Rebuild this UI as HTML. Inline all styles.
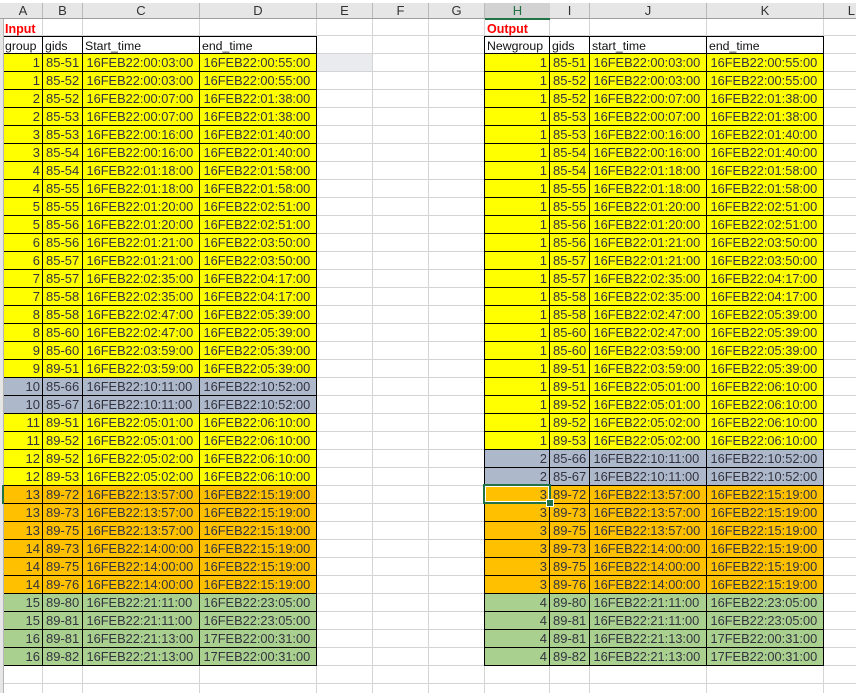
<!DOCTYPE html>
<html><head><meta charset="utf-8"><style>
html,body{margin:0;padding:0;background:#fff}
body{width:856px;height:693px;position:relative;overflow:hidden;font-family:"Liberation Sans",sans-serif}
.grid{position:absolute;left:3px;top:19px;width:853px;height:674px;background-image:linear-gradient(to bottom,transparent 17px,#d4d4d4 17px);background-size:100% 18px;background-position:0 -1px}
.v{position:absolute;top:19px;height:674px;width:1px;background:#d4d4d4}
.top{position:absolute;left:0;top:3px;width:856px;height:15px;background:#e6e6e6;border-bottom:1px solid #9f9f9f}
.side{position:absolute;left:0;top:19px;width:3px;height:674px;background:#e6e6e6;border-right:1px solid #b5b5b5}
.h{position:absolute;top:3px;height:15px;line-height:16px;text-align:center;font-size:13px;color:#333;border-right:1px solid #b9b9b9;box-sizing:border-box}
.h.s{background:#d2d2d2;color:#217346;height:17px;border-bottom:2px solid #217346;border-right:0}
.lbl{position:absolute;top:21px;font-size:12.5px;font-weight:bold;color:#f00;line-height:16px}
table{position:absolute;top:36px;border-collapse:separate;border-spacing:0;table-layout:fixed;border-top:1px solid #000}
td{height:18px;box-sizing:border-box;padding:0 2px 0 3px;border-right:1px solid #000;border-bottom:1px solid #000;font-size:13px;line-height:17px;color:#333340;white-space:nowrap;overflow:hidden;vertical-align:bottom}
td:nth-child(n+3){font-size:12.8px;padding-left:3.5px}
td.n{text-align:right}
tr.t td{height:17px;font-size:12.3px;color:#111;background:#fff;line-height:13px;padding-left:2px}
tr.y td{background:#ff0}
tr.g td{background:#adb9ca}
tr.o td{background:#ffc000}
tr.l td{background:#a9d08e}
#o td:first-child{border-left:1px solid #000}
#in td:first-child{padding-left:1px}
.sel{position:absolute;left:483px;top:484px;width:68px;height:20px;box-sizing:border-box;border:2px solid #217346;box-shadow:inset 0 0 0 1px #fff}
.hd{position:absolute;left:546px;top:499px;width:6px;height:6px;background:#217346;border:1px solid #fff}
</style></head><body>
<div class="grid"></div>
<div class="v" style="left:42px"></div><div class="v" style="left:82px"></div><div class="v" style="left:199px"></div><div class="v" style="left:316px"></div><div class="v" style="left:372px"></div><div class="v" style="left:428px"></div><div class="v" style="left:484px"></div><div class="v" style="left:549px"></div><div class="v" style="left:589px"></div><div class="v" style="left:706px"></div><div class="v" style="left:823px"></div>
<div class="top"></div><div class="side"></div>
<div style="position:absolute;left:317px;top:54px;width:55px;height:17px;background:#e9ebef"></div>
<div class="h" style="left:4px;width:39px">A</div><div class="h" style="left:43px;width:40px">B</div><div class="h" style="left:83px;width:117px">C</div><div class="h" style="left:200px;width:117px">D</div><div class="h" style="left:317px;width:56px">E</div><div class="h" style="left:373px;width:56px">F</div><div class="h" style="left:429px;width:56px">G</div><div class="h s" style="left:485px;width:65px">H</div><div class="h" style="left:550px;width:40px">I</div><div class="h" style="left:590px;width:117px">J</div><div class="h" style="left:707px;width:117px">K</div><div class="h" style="left:824px;width:32px;border-right:0;text-align:right;padding-right:1px">L</div>
<div class="lbl" style="left:5px">Input</div><div class="lbl" style="left:487px">Output</div>
<div style="position:absolute;left:2px;top:485px;width:2px;height:19px;background:#217346"></div>
<table id="in" style="left:4px;width:313px"><colgroup><col style="width:39px"><col style="width:40px"><col style="width:117px"><col style="width:117px"></colgroup>
<tr class="t"><td>group</td><td>gids</td><td>Start_time</td><td>end_time</td></tr>
<tr class="y"><td class="n">1</td><td>85-51</td><td>16FEB22:00:03:00</td><td>16FEB22:00:55:00</td></tr>
<tr class="y"><td class="n">1</td><td>85-52</td><td>16FEB22:00:03:00</td><td>16FEB22:00:55:00</td></tr>
<tr class="y"><td class="n">2</td><td>85-52</td><td>16FEB22:00:07:00</td><td>16FEB22:01:38:00</td></tr>
<tr class="y"><td class="n">2</td><td>85-53</td><td>16FEB22:00:07:00</td><td>16FEB22:01:38:00</td></tr>
<tr class="y"><td class="n">3</td><td>85-53</td><td>16FEB22:00:16:00</td><td>16FEB22:01:40:00</td></tr>
<tr class="y"><td class="n">3</td><td>85-54</td><td>16FEB22:00:16:00</td><td>16FEB22:01:40:00</td></tr>
<tr class="y"><td class="n">4</td><td>85-54</td><td>16FEB22:01:18:00</td><td>16FEB22:01:58:00</td></tr>
<tr class="y"><td class="n">4</td><td>85-55</td><td>16FEB22:01:18:00</td><td>16FEB22:01:58:00</td></tr>
<tr class="y"><td class="n">5</td><td>85-55</td><td>16FEB22:01:20:00</td><td>16FEB22:02:51:00</td></tr>
<tr class="y"><td class="n">5</td><td>85-56</td><td>16FEB22:01:20:00</td><td>16FEB22:02:51:00</td></tr>
<tr class="y"><td class="n">6</td><td>85-56</td><td>16FEB22:01:21:00</td><td>16FEB22:03:50:00</td></tr>
<tr class="y"><td class="n">6</td><td>85-57</td><td>16FEB22:01:21:00</td><td>16FEB22:03:50:00</td></tr>
<tr class="y"><td class="n">7</td><td>85-57</td><td>16FEB22:02:35:00</td><td>16FEB22:04:17:00</td></tr>
<tr class="y"><td class="n">7</td><td>85-58</td><td>16FEB22:02:35:00</td><td>16FEB22:04:17:00</td></tr>
<tr class="y"><td class="n">8</td><td>85-58</td><td>16FEB22:02:47:00</td><td>16FEB22:05:39:00</td></tr>
<tr class="y"><td class="n">8</td><td>85-60</td><td>16FEB22:02:47:00</td><td>16FEB22:05:39:00</td></tr>
<tr class="y"><td class="n">9</td><td>85-60</td><td>16FEB22:03:59:00</td><td>16FEB22:05:39:00</td></tr>
<tr class="y"><td class="n">9</td><td>89-51</td><td>16FEB22:03:59:00</td><td>16FEB22:05:39:00</td></tr>
<tr class="g"><td class="n">10</td><td>85-66</td><td>16FEB22:10:11:00</td><td>16FEB22:10:52:00</td></tr>
<tr class="g"><td class="n">10</td><td>85-67</td><td>16FEB22:10:11:00</td><td>16FEB22:10:52:00</td></tr>
<tr class="y"><td class="n">11</td><td>89-51</td><td>16FEB22:05:01:00</td><td>16FEB22:06:10:00</td></tr>
<tr class="y"><td class="n">11</td><td>89-52</td><td>16FEB22:05:01:00</td><td>16FEB22:06:10:00</td></tr>
<tr class="y"><td class="n">12</td><td>89-52</td><td>16FEB22:05:02:00</td><td>16FEB22:06:10:00</td></tr>
<tr class="y"><td class="n">12</td><td>89-53</td><td>16FEB22:05:02:00</td><td>16FEB22:06:10:00</td></tr>
<tr class="o"><td class="n">13</td><td>89-72</td><td>16FEB22:13:57:00</td><td>16FEB22:15:19:00</td></tr>
<tr class="o"><td class="n">13</td><td>89-73</td><td>16FEB22:13:57:00</td><td>16FEB22:15:19:00</td></tr>
<tr class="o"><td class="n">13</td><td>89-75</td><td>16FEB22:13:57:00</td><td>16FEB22:15:19:00</td></tr>
<tr class="o"><td class="n">14</td><td>89-73</td><td>16FEB22:14:00:00</td><td>16FEB22:15:19:00</td></tr>
<tr class="o"><td class="n">14</td><td>89-75</td><td>16FEB22:14:00:00</td><td>16FEB22:15:19:00</td></tr>
<tr class="o"><td class="n">14</td><td>89-76</td><td>16FEB22:14:00:00</td><td>16FEB22:15:19:00</td></tr>
<tr class="l"><td class="n">15</td><td>89-80</td><td>16FEB22:21:11:00</td><td>16FEB22:23:05:00</td></tr>
<tr class="l"><td class="n">15</td><td>89-81</td><td>16FEB22:21:11:00</td><td>16FEB22:23:05:00</td></tr>
<tr class="l"><td class="n">16</td><td>89-81</td><td>16FEB22:21:13:00</td><td>17FEB22:00:31:00</td></tr>
<tr class="l"><td class="n">16</td><td>89-82</td><td>16FEB22:21:13:00</td><td>17FEB22:00:31:00</td></tr>
</table>
<table id="o" style="left:484px;width:340px"><colgroup><col style="width:66px"><col style="width:40px"><col style="width:117px"><col style="width:117px"></colgroup>
<tr class="t"><td>Newgroup</td><td>gids</td><td>start_time</td><td>end_time</td></tr>
<tr class="y"><td class="n">1</td><td>85-51</td><td>16FEB22:00:03:00</td><td>16FEB22:00:55:00</td></tr>
<tr class="y"><td class="n">1</td><td>85-52</td><td>16FEB22:00:03:00</td><td>16FEB22:00:55:00</td></tr>
<tr class="y"><td class="n">1</td><td>85-52</td><td>16FEB22:00:07:00</td><td>16FEB22:01:38:00</td></tr>
<tr class="y"><td class="n">1</td><td>85-53</td><td>16FEB22:00:07:00</td><td>16FEB22:01:38:00</td></tr>
<tr class="y"><td class="n">1</td><td>85-53</td><td>16FEB22:00:16:00</td><td>16FEB22:01:40:00</td></tr>
<tr class="y"><td class="n">1</td><td>85-54</td><td>16FEB22:00:16:00</td><td>16FEB22:01:40:00</td></tr>
<tr class="y"><td class="n">1</td><td>85-54</td><td>16FEB22:01:18:00</td><td>16FEB22:01:58:00</td></tr>
<tr class="y"><td class="n">1</td><td>85-55</td><td>16FEB22:01:18:00</td><td>16FEB22:01:58:00</td></tr>
<tr class="y"><td class="n">1</td><td>85-55</td><td>16FEB22:01:20:00</td><td>16FEB22:02:51:00</td></tr>
<tr class="y"><td class="n">1</td><td>85-56</td><td>16FEB22:01:20:00</td><td>16FEB22:02:51:00</td></tr>
<tr class="y"><td class="n">1</td><td>85-56</td><td>16FEB22:01:21:00</td><td>16FEB22:03:50:00</td></tr>
<tr class="y"><td class="n">1</td><td>85-57</td><td>16FEB22:01:21:00</td><td>16FEB22:03:50:00</td></tr>
<tr class="y"><td class="n">1</td><td>85-57</td><td>16FEB22:02:35:00</td><td>16FEB22:04:17:00</td></tr>
<tr class="y"><td class="n">1</td><td>85-58</td><td>16FEB22:02:35:00</td><td>16FEB22:04:17:00</td></tr>
<tr class="y"><td class="n">1</td><td>85-58</td><td>16FEB22:02:47:00</td><td>16FEB22:05:39:00</td></tr>
<tr class="y"><td class="n">1</td><td>85-60</td><td>16FEB22:02:47:00</td><td>16FEB22:05:39:00</td></tr>
<tr class="y"><td class="n">1</td><td>85-60</td><td>16FEB22:03:59:00</td><td>16FEB22:05:39:00</td></tr>
<tr class="y"><td class="n">1</td><td>89-51</td><td>16FEB22:03:59:00</td><td>16FEB22:05:39:00</td></tr>
<tr class="y"><td class="n">1</td><td>89-51</td><td>16FEB22:05:01:00</td><td>16FEB22:06:10:00</td></tr>
<tr class="y"><td class="n">1</td><td>89-52</td><td>16FEB22:05:01:00</td><td>16FEB22:06:10:00</td></tr>
<tr class="y"><td class="n">1</td><td>89-52</td><td>16FEB22:05:02:00</td><td>16FEB22:06:10:00</td></tr>
<tr class="y"><td class="n">1</td><td>89-53</td><td>16FEB22:05:02:00</td><td>16FEB22:06:10:00</td></tr>
<tr class="g"><td class="n">2</td><td>85-66</td><td>16FEB22:10:11:00</td><td>16FEB22:10:52:00</td></tr>
<tr class="g"><td class="n">2</td><td>85-67</td><td>16FEB22:10:11:00</td><td>16FEB22:10:52:00</td></tr>
<tr class="o"><td class="n">3</td><td>89-72</td><td>16FEB22:13:57:00</td><td>16FEB22:15:19:00</td></tr>
<tr class="o"><td class="n">3</td><td>89-73</td><td>16FEB22:13:57:00</td><td>16FEB22:15:19:00</td></tr>
<tr class="o"><td class="n">3</td><td>89-75</td><td>16FEB22:13:57:00</td><td>16FEB22:15:19:00</td></tr>
<tr class="o"><td class="n">3</td><td>89-73</td><td>16FEB22:14:00:00</td><td>16FEB22:15:19:00</td></tr>
<tr class="o"><td class="n">3</td><td>89-75</td><td>16FEB22:14:00:00</td><td>16FEB22:15:19:00</td></tr>
<tr class="o"><td class="n">3</td><td>89-76</td><td>16FEB22:14:00:00</td><td>16FEB22:15:19:00</td></tr>
<tr class="l"><td class="n">4</td><td>89-80</td><td>16FEB22:21:11:00</td><td>16FEB22:23:05:00</td></tr>
<tr class="l"><td class="n">4</td><td>89-81</td><td>16FEB22:21:11:00</td><td>16FEB22:23:05:00</td></tr>
<tr class="l"><td class="n">4</td><td>89-81</td><td>16FEB22:21:13:00</td><td>17FEB22:00:31:00</td></tr>
<tr class="l"><td class="n">4</td><td>89-82</td><td>16FEB22:21:13:00</td><td>17FEB22:00:31:00</td></tr>
</table>
<div class="sel"></div><div class="hd"></div>
</body></html>
